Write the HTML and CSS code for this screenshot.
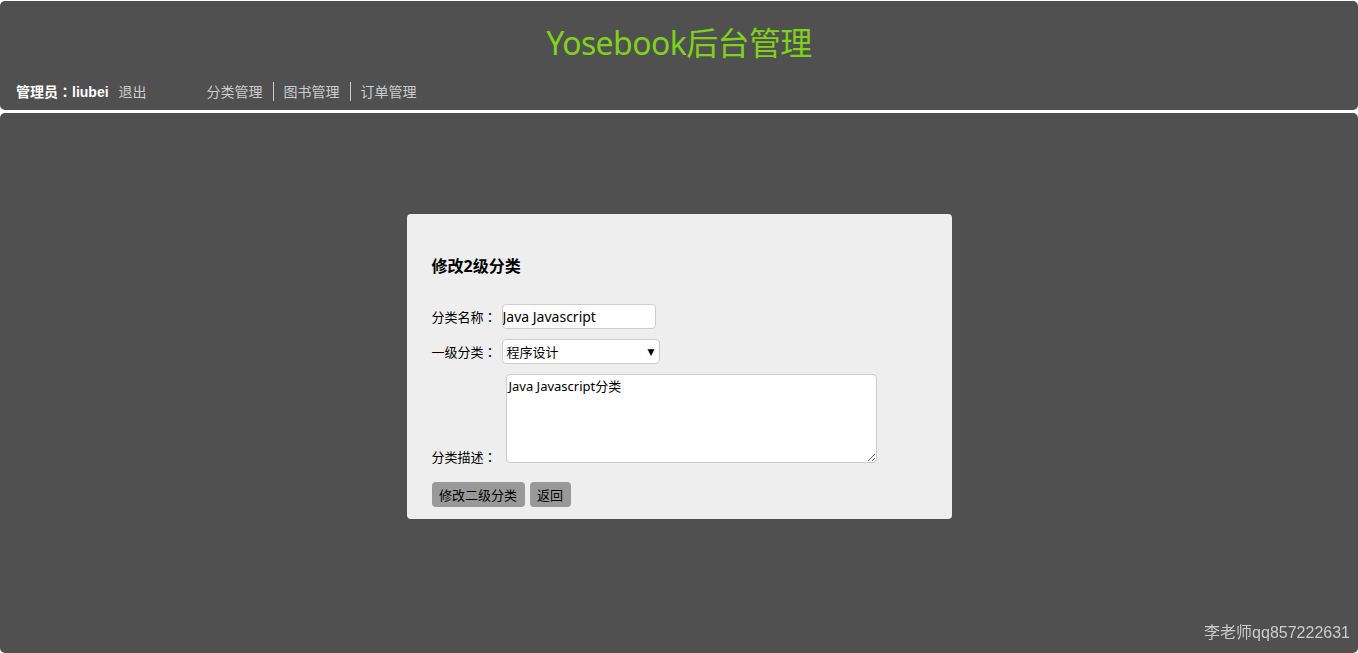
FILE: index.html
```html
<!DOCTYPE html>
<html lang="zh-CN">
<head>
<meta charset="utf-8">
<title>Yosebook后台管理</title>
<link rel="stylesheet" href="styles.css">
</head>
<body>
<div class="header">
  <h1 class="title">Yosebook后台管理</h1>
  <div class="navbar">
    <span class="admin">管理员<span class="colon" lang="zh-TW">：</span>liubei</span>
    <a class="logout" href="#">退出</a>
    <ul class="menu">
      <li><a href="#">分类管理</a></li>
      <li><a href="#">图书管理</a></li>
      <li><a href="#">订单管理</a></li>
    </ul>
  </div>
</div>
<div class="main">
  <div class="card">
    <h3 class="card-title">修改2级分类</h3>
    <form class="form">
      <div class="row">
        <label class="label">分类名称<span class="colon" lang="zh-TW">：</span></label><input class="input" type="text" value="Java Javascript">
      </div>
      <div class="row">
        <label class="label">一级分类<span class="colon" lang="zh-TW">：</span></label><div class="select"><span>程序设计</span><span class="arrow">▼</span></div>
      </div>
      <div class="row row-desc">
        <label class="label">分类描述<span class="colon" lang="zh-TW">：</span></label><textarea class="textarea">Java Javascript分类</textarea>
      </div>
      <div class="buttons">
        <button type="button" class="btn">修改二级分类</button>
        <button type="button" class="btn">返回</button>
      </div>
    </form>
  </div>
</div>
<div class="watermark">李老师qq857222631</div>
</body>
</html>
```
FILE: styles.css
```css
html, body {
  margin: 0;
  padding: 0;
  background: #ffffff;
  height: 100%;
}
body {
  font-family: "Noto Sans", "Noto Sans CJK SC", sans-serif;
  overflow: hidden;
  display: flex;
  flex-direction: column;
}
.colon {
  font-family: "Noto Sans CJK TC", sans-serif;
  font-weight: normal;
}
.admin .colon {
  font-weight: bold;
}
.header {
  flex: none;
  margin-top: 1px;
  height: 109px;
  background: #505050;
  border-radius: 5px;
  box-sizing: border-box;
  padding-top: 20px;
}
.title {
  margin: 0;
  text-align: center;
  font-weight: normal;
  font-size: 32px;
  line-height: 44px;
  color: #7fd11b;
  font-family: "Noto Sans", "Noto Sans CJK SC", sans-serif;
  letter-spacing: -0.6px;
}
.navbar {
  display: flex;
  align-items: center;
  margin-top: 16px;
  padding-left: 16px;
  font-size: 14px;
  line-height: 20px;
}
.admin {
  color: #ffffff;
  font-weight: bold;
  font-family: "Liberation Sans", "Noto Sans CJK SC", sans-serif;
}
.logout {
  color: #cccccc;
  text-decoration: none;
  margin-left: 10px;
}
.menu {
  display: flex;
  list-style: none;
  margin: 0 0 0 60px;
  padding: 0;
}
.menu li {
  padding: 0 10px;
  border-left: 1px solid #cccccc;
  line-height: 19px;
}
.menu li:first-child {
  border-left: none;
  padding-left: 0;
}
.menu a {
  color: #cccccc;
  text-decoration: none;
}
.main {
  flex: 1;
  margin-top: 3px;
  background: #505050;
  border-radius: 5px;
  padding-top: 101px;
  box-sizing: border-box;
}
.card {
  width: 545px;
  height: 305px;
  margin: 0 auto;
  background: #eeeeee;
  border-radius: 4px;
  box-sizing: border-box;
  padding: 41px 25px 12px;
}
.card-title {
  margin: 0;
  font-size: 16px;
  line-height: 22px;
  font-weight: bold;
  color: #000;
}
.form {
  margin-top: 27px;
  font-size: 13px;
  color: #000;
}
.row {
  display: flex;
  align-items: center;
  margin-bottom: 10px;
}
.row-desc {
  align-items: flex-end;
}
.label {
  width: 70px;
  line-height: 18px;
  flex: none;
}
.row-desc .label {
  width: 74px;
  margin-bottom: -3px;
}
.input {
  width: 154px;
  height: 25px;
  box-sizing: border-box;
  border: 1px solid #cccccc;
  border-radius: 4px;
  padding: 0;
  font-family: "Noto Sans", "Noto Sans CJK SC", sans-serif;
  font-size: 14px;
  color: #000;
  background: #fff;
  outline: none;
}
.select {
  width: 158px;
  height: 25px;
  box-sizing: border-box;
  border: 1px solid #cccccc;
  border-radius: 4px;
  background: #fff;
  display: flex;
  align-items: center;
  justify-content: space-between;
  padding: 0 4px 0 4px;
  font-size: 13px;
}
.arrow {
  font-size: 9px;
  font-family: "DejaVu Sans", sans-serif;
}
.textarea {
  width: 371px;
  height: 89px;
  box-sizing: border-box;
  border: 1px solid #cccccc;
  border-radius: 4px;
  padding: 2px 2px;
  font-family: "Noto Sans", "Noto Sans CJK SC", sans-serif;
  font-size: 13px;
  line-height: 18px;
  color: #000;
  background: #fff;
  resize: both;
  outline: none;
}
.buttons {
  display: flex;
  gap: 5px;
  margin-top: 19px;
}
.btn {
  height: 25px;
  padding: 0 7.5px;
  border: none;
  border-radius: 4px;
  background: #999999;
  color: #000;
  font-family: "Noto Sans CJK SC", sans-serif;
  font-size: 13px;
  line-height: 25px;
}
.watermark {
  position: fixed;
  right: 8px;
  bottom: 11px;
  color: #cccccc;
  font-size: 16px;
  line-height: 18px;
  font-family: "Liberation Sans", "Noto Sans CJK SC", sans-serif;
}
```
